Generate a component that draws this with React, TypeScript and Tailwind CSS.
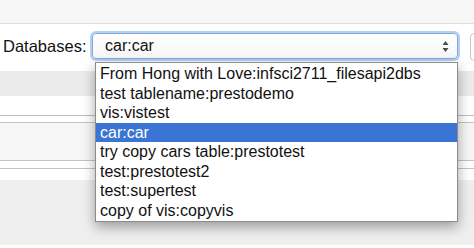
import React from 'react';

const options = [
  'From Hong with Love:infsci2711_filesapi2dbs',
  'test tablename:prestodemo',
  'vis:vistest',
  'car:car',
  'try copy cars table:prestotest',
  'test:prestotest2',
  'test:supertest',
  'copy of vis:copyvis',
];

export default function App() {
  const selected = 'car:car';

  return (
    <div
      className="relative w-[474px] h-[248px] overflow-hidden bg-white text-[#111]"
      style={{ fontFamily: '"Liberation Sans", Arial, sans-serif' }}
    >
      {/* page background bands */}
      <div className="h-[24px] bg-[#f6f6f6] border-b border-[#dedede]" />
      <div className="h-[47px] flex items-start pt-[9px]">
        <span className="shrink-0 w-[92px] pl-[3px] text-[16.5px] leading-[26px]">Databases:</span>
        <div className="relative shrink-0 w-[366px] h-[26px] rounded-[4px] border border-[#7ea9e3] shadow-[0_0_0_2px_rgba(120,165,230,0.55)] bg-gradient-to-b from-white to-[#f7f7f7] flex items-center pl-[12px]">
          <span className="text-[16px] leading-none">{selected}</span>
          <svg className="absolute right-[8px] top-[6px]" width="7" height="13" viewBox="0 0 7 13">
            <path d="M3.5 1 L6.5 5 L0.5 5 Z" fill="#4a4a4a" />
            <path d="M0.5 8 L6.5 8 L3.5 12 Z" fill="#4a4a4a" />
          </svg>
        </div>
        <div className="shrink-0 ml-[12px] w-[20px] h-[28px] rounded-[4px] border border-[#c8c8c8] bg-white" />
      </div>
      <div className="h-[25px] bg-[#ebebeb]" />
      <div className="h-[20px] bg-white border-b border-[#bdbdbd]" />
      <div className="h-[7px] bg-white border-b border-[#c4c4c4]" />
      <div className="h-[38px] bg-[#f6f6f6] border-b border-[#c4c4c4]" />
      <div className="h-[8px] bg-white border-b border-[#c4c4c4]" />
      <div className="h-[11px] bg-white" />
      <div className="h-[65px] bg-[#efefef]" />

      {/* open dropdown list */}
      <div className="absolute left-[95px] top-[62px] w-[363px] bg-white border border-[#8c8c8c] shadow-[0_5px_12px_rgba(0,0,0,0.35)] py-px">
        {options.map((o) => (
          <div
            key={o}
            className={
              o === selected
                ? 'h-[19.5px] leading-[19.5px] pl-[4px] text-[16px] bg-[#3a74d4] text-white'
                : 'h-[19.5px] leading-[19.5px] pl-[4px] text-[16px]'
            }
          >
            {o}
          </div>
        ))}
      </div>
    </div>
  );
}
